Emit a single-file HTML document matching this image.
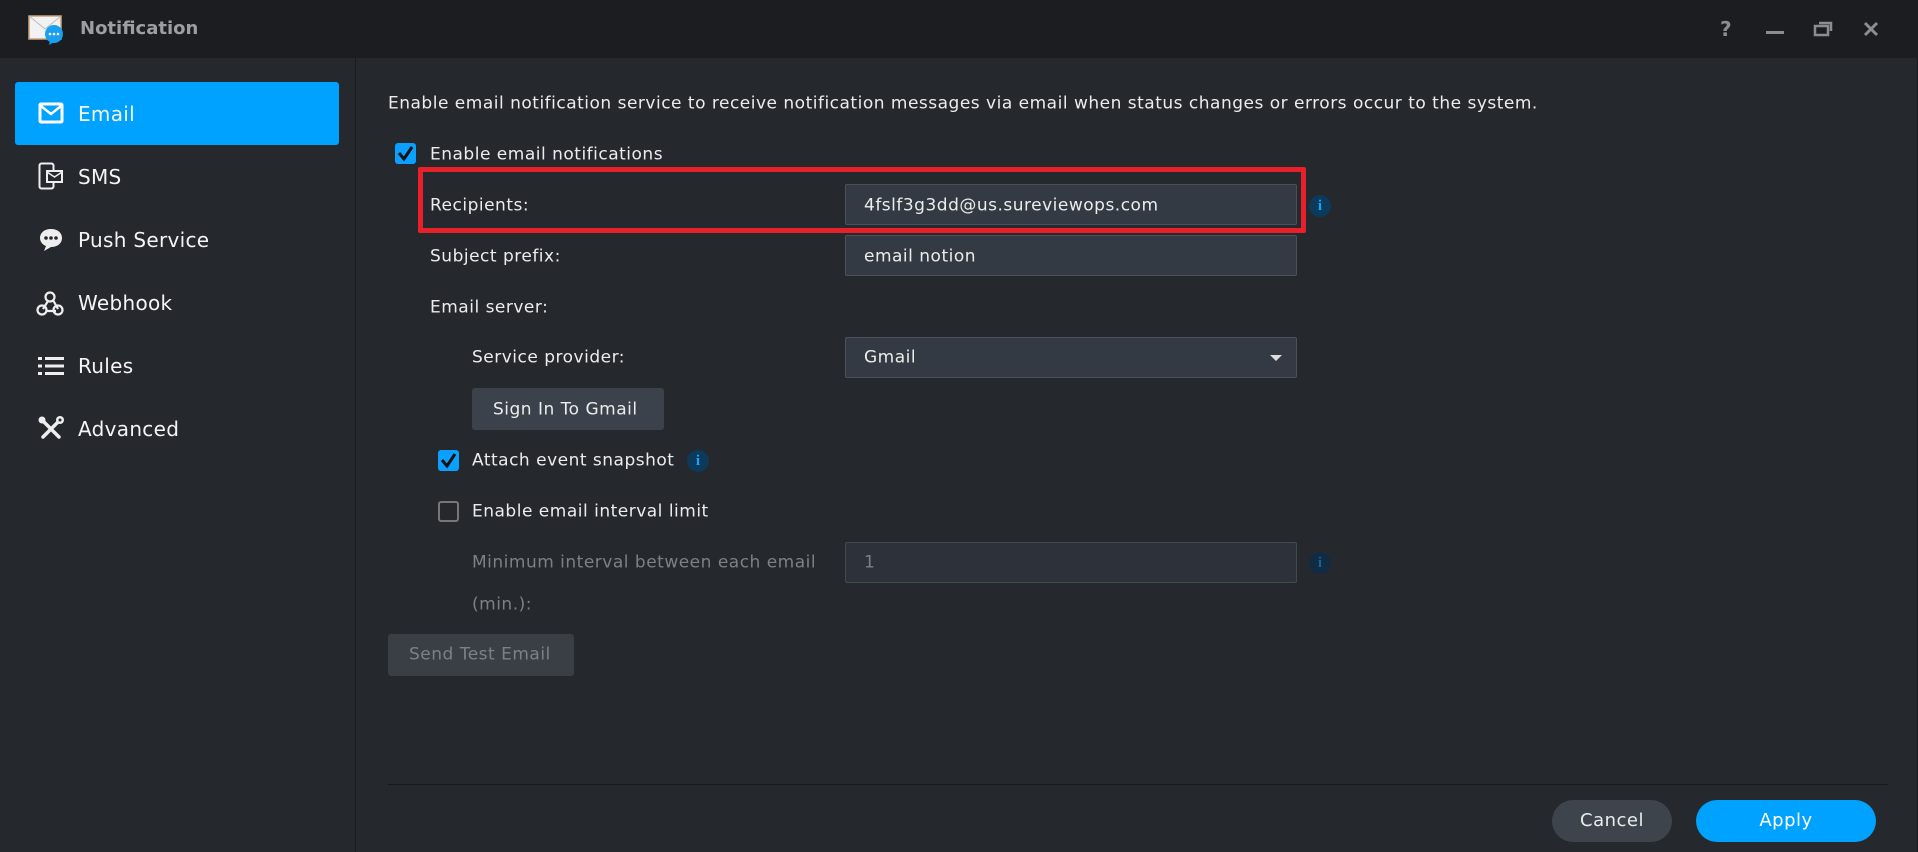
<!DOCTYPE html>
<html><head><meta charset="utf-8"><style>
*{margin:0;padding:0;box-sizing:border-box}
body{width:1918px;height:852px;background:#25282d;font-family:"DejaVu Sans","Liberation Sans",sans-serif;color:#ececec;position:relative;overflow:hidden;font-size:17px;letter-spacing:0.5px}
.a{position:absolute;white-space:nowrap}
.t{line-height:1;transform:translateY(-50%)}
#title{left:0;top:0;width:1918px;height:58px;background:#1b1d21}
#side{left:0;top:58px;width:356px;height:794px;background:#25282d;border-right:1px solid #1a1c20}
.nav{left:78px;font-size:20px;color:#f4f4f4;letter-spacing:0.3px}
.inp{background:#343a44;border:1px solid #4b515a;border-radius:2px;height:41px;width:452px;left:845px}
.cb{width:21px;height:21px;border-radius:3px;background:#0aa0ff}
.info{width:22px;height:22px;border-radius:50%;background:#0c3a5a;color:#19a3ff;font-size:15px;font-weight:bold;text-align:center;line-height:22px;font-family:"Liberation Serif",serif;letter-spacing:0}
</style></head><body>
<div id="title" class="a"></div>
<svg class="a" style="left:28px;top:14px" width="38" height="32" viewBox="0 0 38 32"><rect x="1" y="2" width="32" height="23" fill="#f2f2f2" stroke="#c9a27a" stroke-width="1.5"/><path d="M1 2 L17 15 L33 2" fill="none" stroke="#bbb"/><circle cx="26" cy="20" r="9" fill="#1aa0f0"/><path d="M22 27 l-1 4 5-3z" fill="#1aa0f0"/><circle cx="22" cy="20" r="1.3" fill="#fff"/><circle cx="26" cy="20" r="1.3" fill="#fff"/><circle cx="30" cy="20" r="1.3" fill="#fff"/></svg>
<div class="a t" style="left:80px;top:29px;font-size:18px;font-weight:bold;color:#9b9ea3;letter-spacing:0">Notification</div>
<div class="a t" style="left:1720px;top:29px;font-size:20px;font-weight:bold;color:#8a8d92">?</div>
<div class="a" style="left:1766px;top:31px;width:18px;height:3px;background:#8a8d92"></div>
<svg class="a" style="left:1813px;top:20px" width="20" height="18" viewBox="0 0 20 18"><rect x="2" y="6" width="13" height="9" fill="none" stroke="#8a8d92" stroke-width="2.5"/><path d="M6 3 H18 V11" fill="none" stroke="#8a8d92" stroke-width="2.5"/></svg>
<svg class="a" style="left:1863px;top:21px" width="16" height="16" viewBox="0 0 16 16"><path d="M2 2 L14 14 M14 2 L2 14" stroke="#8a8d92" stroke-width="3"/></svg>

<div id="side" class="a"></div>
<div class="a" style="left:15px;top:82px;width:324px;height:63px;background:#00a2ff;border-radius:3px"></div>
<svg class="a" style="left:38px;top:102px" width="26" height="22" viewBox="0 0 26 22"><rect x="2" y="2" width="22" height="18" rx="1" fill="none" stroke="#fff" stroke-width="3"/><path d="M3 4 L13 12 L23 4" fill="none" stroke="#fff" stroke-width="2.5"/></svg>
<div class="a t nav" style="top:114px">Email</div>
<svg class="a" style="left:38px;top:162px" width="26" height="28" viewBox="0 0 26 28"><rect x="1.5" y="1.5" width="14" height="25" rx="2" fill="none" stroke="#eee" stroke-width="2"/><rect x="9" y="9" width="15" height="11" fill="#25282d" stroke="#eee" stroke-width="2"/><path d="M9 10 L16.5 15 L24 10" fill="none" stroke="#eee" stroke-width="1.5"/></svg>
<div class="a t nav" style="top:177px">SMS</div>
<svg class="a" style="left:38px;top:227px" width="26" height="26" viewBox="0 0 26 26"><path d="M13 2 C6 2 2 6 2 11 C2 15 5 18 8 19 L6 24 L13 20 C20 20 24 16 24 11 C24 6 20 2 13 2Z" fill="#eee"/><circle cx="8" cy="11" r="1.8" fill="#25282d"/><circle cx="13" cy="11" r="1.8" fill="#25282d"/><circle cx="18" cy="11" r="1.8" fill="#25282d"/></svg>
<div class="a t nav" style="top:240px">Push Service</div>
<svg class="a" style="left:36px;top:290px" width="28" height="26" viewBox="0 0 28 26"><g fill="none" stroke="#eee" stroke-width="2.2"><circle cx="14" cy="7" r="4.5"/><circle cx="6" cy="20" r="4.5"/><circle cx="22" cy="20" r="4.5"/><path d="M12 11 L7 19 M17 10 L22 19 M10 21 H20"/></g></svg>
<div class="a t nav" style="top:303px">Webhook</div>
<svg class="a" style="left:38px;top:356px" width="26" height="20" viewBox="0 0 26 20"><g fill="#eee"><rect x="0" y="1" width="4" height="3"/><rect x="7" y="1" width="19" height="3"/><rect x="0" y="8.5" width="4" height="3"/><rect x="7" y="8.5" width="19" height="3"/><rect x="0" y="16" width="4" height="3"/><rect x="7" y="16" width="19" height="3"/></g></svg>
<div class="a t nav" style="top:366px">Rules</div>
<svg class="a" style="left:38px;top:416px" width="26" height="26" viewBox="0 0 26 26"><g stroke="#eee" stroke-width="3.5" stroke-linecap="round"><path d="M5 5 L21 21"/><path d="M21 5 L5 21"/></g><circle cx="4" cy="4" r="3.5" fill="#eee"/><circle cx="22" cy="4" r="4" fill="#eee"/><circle cx="22" cy="4" r="1.5" fill="#25282d"/></svg>
<div class="a t nav" style="top:429px">Advanced</div>

<div class="a t" style="left:388px;top:104px">Enable email notification service to receive notification messages via email when status changes or errors occur to the system.</div>
<div class="a cb" style="left:395px;top:143px"></div>
<svg class="a" style="left:395px;top:143px" width="21" height="21" viewBox="0 0 21 21"><path d="M4 10 L9 16 L17 4" fill="none" stroke="#111" stroke-width="3"/></svg>
<div class="a t" style="left:430px;top:155px">Enable email notifications</div>
<div class="a" style="left:418px;top:167px;width:888px;height:66px;border:5px solid #e8202a;border-radius:2px"></div>
<div class="a t" style="left:430px;top:206px">Recipients:</div>
<div class="a inp" style="top:184px"></div>
<div class="a t" style="left:864px;top:206px">4fslf3g3dd@us.sureviewops.com</div>
<div class="a info" style="left:1309px;top:195px">i</div>
<div class="a t" style="left:430px;top:257px">Subject prefix:</div>
<div class="a inp" style="top:235px"></div>
<div class="a t" style="left:864px;top:257px">email notion</div>
<div class="a t" style="left:430px;top:308px">Email server:</div>
<div class="a t" style="left:472px;top:358px">Service provider:</div>
<div class="a inp" style="top:337px"></div>
<div class="a t" style="left:864px;top:358px">Gmail</div>
<div class="a" style="left:1270px;top:355px;width:0;height:0;border-left:6px solid transparent;border-right:6px solid transparent;border-top:6px solid #ddd"></div>
<div class="a" style="left:472px;top:388px;width:192px;height:42px;background:#3c424b;border-radius:3px"></div>
<div class="a t" style="left:493px;top:410px">Sign In To Gmail</div>
<div class="a cb" style="left:438px;top:450px"></div>
<svg class="a" style="left:438px;top:450px" width="21" height="21" viewBox="0 0 21 21"><path d="M4 10 L9 16 L17 4" fill="none" stroke="#111" stroke-width="3"/></svg>
<div class="a t" style="left:472px;top:461px">Attach event snapshot</div>
<div class="a info" style="left:687px;top:450px">i</div>
<div class="a" style="left:438px;top:501px;width:21px;height:21px;border:2px solid #777;border-radius:3px"></div>
<div class="a t" style="left:472px;top:512px">Enable email interval limit</div>
<div class="a t" style="left:472px;top:563px;color:#7c8087">Minimum interval between each email</div>
<div class="a t" style="left:472px;top:605px;color:#7c8087">(min.):</div>
<div class="a inp" style="top:542px;background:#2d3139;border-color:#444950"></div>
<div class="a t" style="left:864px;top:563px;color:#7c8087">1</div>
<div class="a info" style="left:1309px;top:552px;background:#0f2c42;color:#1d5f8e">i</div>
<div class="a" style="left:388px;top:634px;width:186px;height:42px;background:#3a3f46;border-radius:3px"></div>
<div class="a t" style="left:409px;top:655px;color:#7c8087">Send Test Email</div>
<div class="a" style="left:388px;top:784px;width:1500px;height:1px;background:#16181b"></div>
<div class="a" style="left:1917px;top:58px;width:1px;height:794px;background:#16181b"></div>
<div class="a" style="left:1552px;top:800px;width:120px;height:42px;background:#3e444c;border-radius:21px;text-align:center;line-height:42px;font-size:18px">Cancel</div>
<div class="a" style="left:1696px;top:800px;width:180px;height:42px;background:#00a2ff;border-radius:21px;text-align:center;line-height:42px;font-size:18px;color:#fff">Apply</div>
</body></html>
